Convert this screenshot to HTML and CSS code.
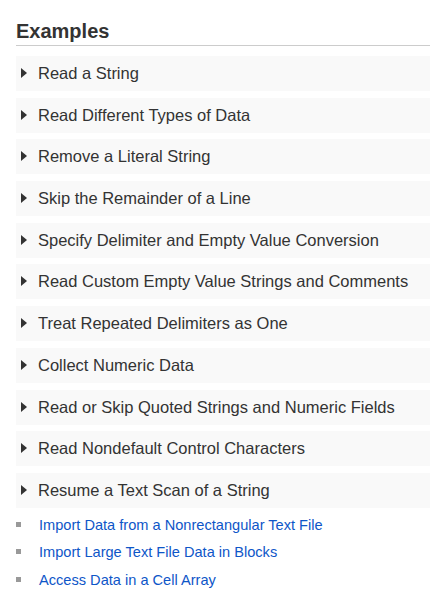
FILE: index.html
```html
<!DOCTYPE html>
<html>
<head>
    <title>Examples</title>
    <meta name="viewport" content="width=device-width, initial-scale=1.0">
    <link rel="stylesheet" href="styles.css">
</head>
<body>
    <div class="container">
        <h2 class="section-title">Examples</h2>
        <div class="example">Read a String</div>
        <div class="example">Read Different Types of Data</div>
        <div class="example">Remove a Literal String</div>
        <div class="example">Skip the Remainder of a Line</div>
        <div class="example">Specify Delimiter and Empty Value Conversion</div>
        <div class="example">Read Custom Empty Value Strings and Comments</div>
        <div class="example">Treat Repeated Delimiters as One</div>
        <div class="example">Collect Numeric Data</div>
        <div class="example">Read or Skip Quoted Strings and Numeric Fields</div>
        <div class="example">Read Nondefault Control Characters</div>
        <div class="example">Resume a Text Scan of a String</div>
        <ul class="related">
            <li><a href="#">Import Data from a Nonrectangular Text File</a></li>
            <li><a href="#">Import Large Text File Data in Blocks</a></li>
            <li><a href="#">Access Data in a Cell Array</a></li>
        </ul>
    </div>
</body>
</html>
```

FILE: styles.css
```css
body {
    margin: 0;
    background-color: white;
    font-family: 'Liberation Sans', Arial, sans-serif;
    color: #333;
    overflow: hidden;
}

.container {
    width: 700px;
    padding: 19px 0 0 16px;
}

.section-title {
    margin: 0 0 10px 0;
    padding-bottom: 2px;
    font-size: 20px;
    line-height: 24px;
    font-weight: bold;
    color: #333;
    border-bottom: 1px solid #ccc;
}

.example {
    display: flex;
    align-items: center;
    height: 35px;
    margin-bottom: 6.7px;
    padding-left: 22px;
    background-color: #f9f9f9;
    font-size: 16.5px;
    position: relative;
}

.example::before {
    content: '';
    position: absolute;
    left: 5px;
    top: 12px;
    border-top: 5.5px solid transparent;
    border-bottom: 5.5px solid transparent;
    border-left: 6px solid #333;
}

.related {
    list-style: none;
    margin: -3px 0 0 0;
    padding: 0;
}

.related li {
    position: relative;
    padding-left: 23px;
    font-size: 14.6px;
    line-height: 27.5px;
}

.related li::before {
    content: '';
    position: absolute;
    left: 0;
    top: 10px;
    width: 5px;
    height: 5px;
    background-color: #999;
}

.related a {
    color: #0e56c8;
    text-decoration: none;
}
```
